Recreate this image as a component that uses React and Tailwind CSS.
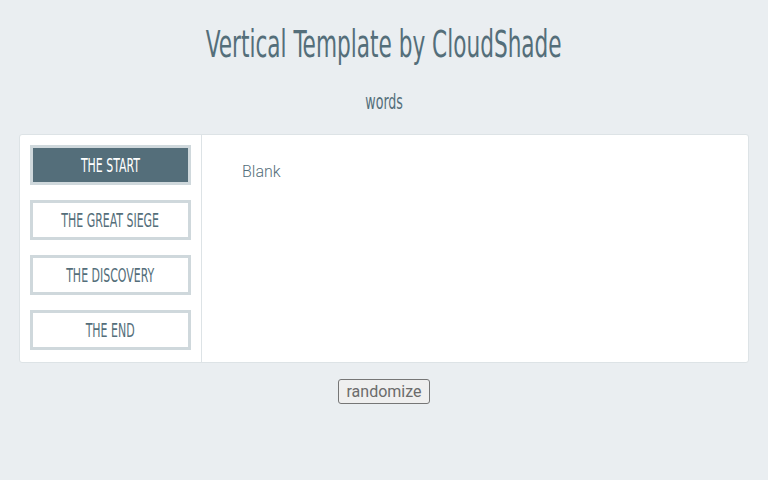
import { useState } from "react";

const chapters = ["THE START", "THE GREAT SIEGE", "THE DISCOVERY", "THE END"];

// Oswald-like look: condensed DejaVu squeezed a bit more
const narrow = { fontFamily: '"DejaVu Sans Condensed", "DejaVu Sans", sans-serif', fontStretch: "condensed" };

export default function App() {
  const [active, setActive] = useState(0);

  return (
    <div className="min-h-screen bg-[#eaeef1] pt-[23px] font-['Roboto',sans-serif]">
      <h1 style={narrow} className="text-center text-[37px] leading-[44px] text-[#546e7a]">
        <span className="inline-block scale-x-[0.65] whitespace-nowrap">Vertical Template by CloudShade</span>
      </h1>
      <h2 style={narrow} className="mt-[23px] text-center text-[21px] leading-[24px] text-[#546e7a]">
        <span className="inline-block scale-x-[0.67]">words</span>
      </h2>

      <div className="mx-[19px] mt-[20px] flex h-[229px] rounded-[3px] border border-[#dde3e6] bg-white">
        <div className="flex w-[182px] flex-col gap-[15px] border-r border-[#dde3e6] pl-[10px] pt-[10px]">
          {chapters.map((c, i) => (
            <button
              key={c}
              onClick={() => setActive(i)}
              style={narrow}
              className={
                i === active
                  ? "flex h-[40px] w-[161px] items-center justify-center border-[3px] border-[#cfd8dc] bg-[#546e7a] text-[20px] text-white"
                  : "flex h-[40px] w-[161px] items-center justify-center border-[3px] border-[#cfd8dc] bg-white text-[20px] text-[#546e7a]"
              }
            >
              <span className="inline-block shrink-0 scale-x-[0.61] whitespace-nowrap">{c}</span>
            </button>
          ))}
        </div>
        <div className="flex-1 pl-[40px] pt-[25px] text-[16px] font-light text-[#546e7a]">Blank</div>
      </div>

      <div className="mt-[16px] flex justify-center">
        <button className="h-[25px] rounded-[3px] border border-[#767676] bg-[#efefef] px-[7px] text-[16px] leading-[20px] text-[#6b6b6b]">
          randomize
        </button>
      </div>
    </div>
  );
}
